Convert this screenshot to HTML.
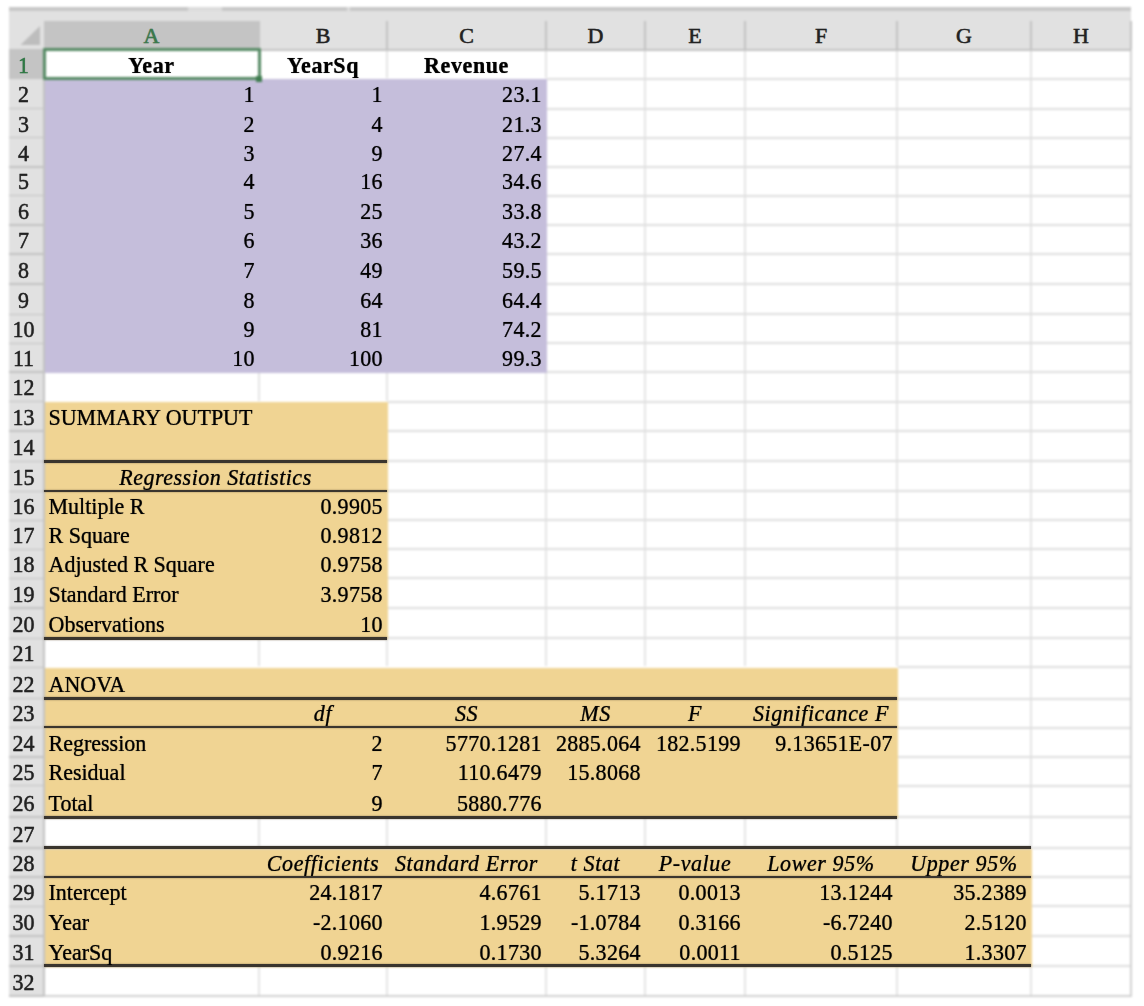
<!DOCTYPE html>
<html><head><meta charset="utf-8"><style>
html,body{margin:0;padding:0;background:#fff;}
body{width:1144px;height:1006px;position:relative;overflow:hidden;font-family:"Liberation Serif",serif;color:#000;}
div{position:absolute;box-sizing:content-box;}
.t{position:absolute;display:block;box-sizing:border-box;font-size:22px;line-height:22px;white-space:nowrap;}
.t{height:22px;transform:scaleY(1.07);transform-origin:50% 18px;-webkit-text-stroke:0.2px currentColor;text-shadow:0 0 1px rgba(0,0,0,0.45);}
.r{text-align:right;padding-right:4.5px;}
.l{text-align:left;padding-left:4.5px;}
.c{text-align:center;}
.rn{-webkit-text-stroke:0.35px currentColor;}
.hb{font-weight:normal;-webkit-text-stroke:0.4px currentColor;transform:none;}
.bl{letter-spacing:0.6px;}
#wrap{position:absolute;left:0;top:0;width:1144px;height:1006px;filter:blur(0.8px);}
</style></head><body><div id="wrap">
<div style="left:9.00px;top:7.00px;width:1122.00px;height:989.10px;background:#e1e1e1;"></div>
<div style="left:9.00px;top:7.00px;width:1122.00px;height:3.80px;background:#c8c8c8;"></div>
<div style="left:188.00px;top:7.00px;width:34.00px;height:3.80px;background:#dcdcdc;"></div>
<div style="left:347.00px;top:7.00px;width:3.00px;height:3.80px;background:#dcdcdc;"></div>
<div style="left:44.00px;top:49.00px;width:1087.00px;height:947.10px;background:#ffffff;"></div>
<div style="left:44.00px;top:20.50px;width:215.00px;height:28.50px;background:#c4c4c4;"></div>
<div style="left:9.00px;top:49.00px;width:35.00px;height:29.70px;background:#c4c4c4;"></div>
<div style="left:258.00px;top:49.00px;width:2.00px;height:947.10px;background:#e5e5e5;"></div>
<div style="left:386.00px;top:49.00px;width:2.00px;height:947.10px;background:#e5e5e5;"></div>
<div style="left:545.00px;top:49.00px;width:2.00px;height:947.10px;background:#e5e5e5;"></div>
<div style="left:644.00px;top:49.00px;width:2.00px;height:947.10px;background:#e5e5e5;"></div>
<div style="left:744.00px;top:49.00px;width:2.00px;height:947.10px;background:#e5e5e5;"></div>
<div style="left:896.00px;top:49.00px;width:2.00px;height:947.10px;background:#e5e5e5;"></div>
<div style="left:1030.00px;top:49.00px;width:2.00px;height:947.10px;background:#e5e5e5;"></div>
<div style="left:1130.00px;top:49.00px;width:2.00px;height:947.10px;background:#e5e5e5;"></div>
<div style="left:44.00px;top:78.00px;width:1087.00px;height:2.00px;background:#dfdfdf;"></div>
<div style="left:44.00px;top:108.00px;width:1087.00px;height:2.00px;background:#dfdfdf;"></div>
<div style="left:44.00px;top:137.00px;width:1087.00px;height:2.00px;background:#dfdfdf;"></div>
<div style="left:44.00px;top:166.00px;width:1087.00px;height:2.00px;background:#dfdfdf;"></div>
<div style="left:44.00px;top:195.00px;width:1087.00px;height:2.00px;background:#dfdfdf;"></div>
<div style="left:44.00px;top:224.00px;width:1087.00px;height:2.00px;background:#dfdfdf;"></div>
<div style="left:44.00px;top:253.00px;width:1087.00px;height:2.00px;background:#dfdfdf;"></div>
<div style="left:44.00px;top:283.00px;width:1087.00px;height:2.00px;background:#dfdfdf;"></div>
<div style="left:44.00px;top:313.00px;width:1087.00px;height:2.00px;background:#dfdfdf;"></div>
<div style="left:44.00px;top:342.00px;width:1087.00px;height:2.00px;background:#dfdfdf;"></div>
<div style="left:44.00px;top:371.00px;width:1087.00px;height:2.00px;background:#dfdfdf;"></div>
<div style="left:44.00px;top:401.00px;width:1087.00px;height:2.00px;background:#dfdfdf;"></div>
<div style="left:44.00px;top:430.00px;width:1087.00px;height:2.00px;background:#dfdfdf;"></div>
<div style="left:44.00px;top:460.00px;width:1087.00px;height:2.00px;background:#dfdfdf;"></div>
<div style="left:44.00px;top:490.00px;width:1087.00px;height:2.00px;background:#dfdfdf;"></div>
<div style="left:44.00px;top:519.00px;width:1087.00px;height:2.00px;background:#dfdfdf;"></div>
<div style="left:44.00px;top:548.00px;width:1087.00px;height:2.00px;background:#dfdfdf;"></div>
<div style="left:44.00px;top:577.00px;width:1087.00px;height:2.00px;background:#dfdfdf;"></div>
<div style="left:44.00px;top:607.00px;width:1087.00px;height:2.00px;background:#dfdfdf;"></div>
<div style="left:44.00px;top:637.00px;width:1087.00px;height:2.00px;background:#dfdfdf;"></div>
<div style="left:44.00px;top:666.00px;width:1087.00px;height:2.00px;background:#dfdfdf;"></div>
<div style="left:44.00px;top:698.00px;width:1087.00px;height:2.00px;background:#dfdfdf;"></div>
<div style="left:44.00px;top:727.00px;width:1087.00px;height:2.00px;background:#dfdfdf;"></div>
<div style="left:44.00px;top:756.00px;width:1087.00px;height:2.00px;background:#dfdfdf;"></div>
<div style="left:44.00px;top:785.00px;width:1087.00px;height:2.00px;background:#dfdfdf;"></div>
<div style="left:44.00px;top:816.00px;width:1087.00px;height:2.00px;background:#dfdfdf;"></div>
<div style="left:44.00px;top:847.00px;width:1087.00px;height:2.00px;background:#dfdfdf;"></div>
<div style="left:44.00px;top:876.00px;width:1087.00px;height:2.00px;background:#dfdfdf;"></div>
<div style="left:44.00px;top:905.00px;width:1087.00px;height:2.00px;background:#dfdfdf;"></div>
<div style="left:44.00px;top:935.00px;width:1087.00px;height:2.00px;background:#dfdfdf;"></div>
<div style="left:44.00px;top:965.00px;width:1087.00px;height:2.00px;background:#dfdfdf;"></div>
<div style="left:44.00px;top:995.00px;width:1087.00px;height:2.00px;background:#dfdfdf;"></div>
<div style="left:1129.50px;top:20.50px;width:2.00px;height:976.10px;background:#d2d2d2;"></div>
<div style="left:9.00px;top:994.60px;width:1122.50px;height:2.00px;background:#d2d2d2;"></div>
<div style="left:44.00px;top:77.80px;width:502.75px;height:1.65px;background:#ffffff;"></div>
<div style="left:44.00px;top:79.45px;width:502.75px;height:293.50px;background:#c5bedb;"></div>
<div style="left:44.00px;top:400.60px;width:343.75px;height:1.65px;background:#ffffff;"></div>
<div style="left:44.00px;top:402.25px;width:343.75px;height:236.90px;background:#f0d493;"></div>
<div style="left:44.00px;top:666.40px;width:853.75px;height:1.65px;background:#ffffff;"></div>
<div style="left:44.00px;top:668.05px;width:853.75px;height:149.70px;background:#f0d493;"></div>
<div style="left:44.00px;top:847.00px;width:987.75px;height:1.65px;background:#ffffff;"></div>
<div style="left:44.00px;top:848.65px;width:987.75px;height:118.00px;background:#f0d493;"></div>
<div style="left:258.25px;top:20.50px;width:1.50px;height:28.50px;background:#c3c3c3;"></div>
<div style="left:386.25px;top:20.50px;width:1.50px;height:28.50px;background:#c3c3c3;"></div>
<div style="left:545.25px;top:20.50px;width:1.50px;height:28.50px;background:#c3c3c3;"></div>
<div style="left:644.25px;top:20.50px;width:1.50px;height:28.50px;background:#c3c3c3;"></div>
<div style="left:744.25px;top:20.50px;width:1.50px;height:28.50px;background:#c3c3c3;"></div>
<div style="left:896.25px;top:20.50px;width:1.50px;height:28.50px;background:#c3c3c3;"></div>
<div style="left:1030.25px;top:20.50px;width:1.50px;height:28.50px;background:#c3c3c3;"></div>
<div style="left:1130.25px;top:20.50px;width:1.50px;height:28.50px;background:#c3c3c3;"></div>
<div style="left:9.00px;top:48.50px;width:1122.00px;height:2.20px;background:#c3c3c3;"></div>
<div style="left:9.00px;top:77.95px;width:35.00px;height:1.50px;background:#c3c3c3;"></div>
<div style="left:9.00px;top:107.85px;width:35.00px;height:1.50px;background:#c3c3c3;"></div>
<div style="left:9.00px;top:136.95px;width:35.00px;height:1.50px;background:#c3c3c3;"></div>
<div style="left:9.00px;top:166.05px;width:35.00px;height:1.50px;background:#c3c3c3;"></div>
<div style="left:9.00px;top:194.85px;width:35.00px;height:1.50px;background:#c3c3c3;"></div>
<div style="left:9.00px;top:224.15px;width:35.00px;height:1.50px;background:#c3c3c3;"></div>
<div style="left:9.00px;top:253.15px;width:35.00px;height:1.50px;background:#c3c3c3;"></div>
<div style="left:9.00px;top:283.45px;width:35.00px;height:1.50px;background:#c3c3c3;"></div>
<div style="left:9.00px;top:313.75px;width:35.00px;height:1.50px;background:#c3c3c3;"></div>
<div style="left:9.00px;top:342.65px;width:35.00px;height:1.50px;background:#c3c3c3;"></div>
<div style="left:9.00px;top:371.45px;width:35.00px;height:1.50px;background:#c3c3c3;"></div>
<div style="left:9.00px;top:400.75px;width:35.00px;height:1.50px;background:#c3c3c3;"></div>
<div style="left:9.00px;top:430.05px;width:35.00px;height:1.50px;background:#c3c3c3;"></div>
<div style="left:9.00px;top:460.55px;width:35.00px;height:1.50px;background:#c3c3c3;"></div>
<div style="left:9.00px;top:490.55px;width:35.00px;height:1.50px;background:#c3c3c3;"></div>
<div style="left:9.00px;top:519.75px;width:35.00px;height:1.50px;background:#c3c3c3;"></div>
<div style="left:9.00px;top:548.55px;width:35.00px;height:1.50px;background:#c3c3c3;"></div>
<div style="left:9.00px;top:577.55px;width:35.00px;height:1.50px;background:#c3c3c3;"></div>
<div style="left:9.00px;top:607.35px;width:35.00px;height:1.50px;background:#c3c3c3;"></div>
<div style="left:9.00px;top:637.65px;width:35.00px;height:1.50px;background:#c3c3c3;"></div>
<div style="left:9.00px;top:666.55px;width:35.00px;height:1.50px;background:#c3c3c3;"></div>
<div style="left:9.00px;top:697.85px;width:35.00px;height:1.50px;background:#c3c3c3;"></div>
<div style="left:9.00px;top:726.75px;width:35.00px;height:1.50px;background:#c3c3c3;"></div>
<div style="left:9.00px;top:756.15px;width:35.00px;height:1.50px;background:#c3c3c3;"></div>
<div style="left:9.00px;top:784.95px;width:35.00px;height:1.50px;background:#c3c3c3;"></div>
<div style="left:9.00px;top:816.25px;width:35.00px;height:1.50px;background:#c3c3c3;"></div>
<div style="left:9.00px;top:847.15px;width:35.00px;height:1.50px;background:#c3c3c3;"></div>
<div style="left:9.00px;top:876.45px;width:35.00px;height:1.50px;background:#c3c3c3;"></div>
<div style="left:9.00px;top:905.55px;width:35.00px;height:1.50px;background:#c3c3c3;"></div>
<div style="left:9.00px;top:935.05px;width:35.00px;height:1.50px;background:#c3c3c3;"></div>
<div style="left:9.00px;top:965.15px;width:35.00px;height:1.50px;background:#c3c3c3;"></div>
<div style="left:9.00px;top:995.35px;width:35.00px;height:1.50px;background:#c3c3c3;"></div>
<div style="left:43.25px;top:49.00px;width:1.50px;height:947.10px;background:#c3c3c3;"></div>
<div style="left:42.50px;top:47.50px;width:212.00px;height:26.70px;border:3px solid #568a64;border-radius:1px;background:transparent"></div>
<div style="left:256.00px;top:75.70px;width:6.00px;height:6.00px;background:#3f7d4f;"></div>
<svg style="position:absolute;left:0;top:0" width="60" height="60"><polygon points="20.5,45 40,45 40,26" fill="#bdbdbd"/></svg>
</div>
<div style="left:44.00px;top:460.00px;width:343.00px;height:3.00px;background:#3a352e;box-shadow:0 0 1.6px rgba(40,36,30,0.6)"></div>
<div style="left:44.00px;top:490.00px;width:343.00px;height:2.00px;background:#3a352e;box-shadow:0 0 1.6px rgba(40,36,30,0.6)"></div>
<div style="left:44.00px;top:637.00px;width:343.00px;height:3.00px;background:#3a352e;box-shadow:0 0 1.6px rgba(40,36,30,0.6)"></div>
<div style="left:44.00px;top:697.00px;width:853.00px;height:3.00px;background:#3a352e;box-shadow:0 0 1.6px rgba(40,36,30,0.6)"></div>
<div style="left:44.00px;top:726.00px;width:853.00px;height:2.00px;background:#3a352e;box-shadow:0 0 1.6px rgba(40,36,30,0.6)"></div>
<div style="left:44.00px;top:816.00px;width:853.00px;height:3.00px;background:#3a352e;box-shadow:0 0 1.6px rgba(40,36,30,0.6)"></div>
<div style="left:44.00px;top:846.00px;width:987.00px;height:3.00px;background:#3a352e;box-shadow:0 0 1.6px rgba(40,36,30,0.6)"></div>
<div style="left:44.00px;top:876.00px;width:987.00px;height:2.00px;background:#3a352e;box-shadow:0 0 1.6px rgba(40,36,30,0.6)"></div>
<div style="left:44.00px;top:964.00px;width:987.00px;height:3.00px;background:#3a352e;box-shadow:0 0 1.6px rgba(40,36,30,0.6)"></div>
<span class="t c hb" style="left:44.00px;width:215.00px;top:24.80px;color:#3a7a4c">A</span>
<span class="t c hb" style="left:259.00px;width:128.00px;top:24.80px;color:#222">B</span>
<span class="t c hb" style="left:387.00px;width:159.00px;top:24.80px;color:#222">C</span>
<span class="t c hb" style="left:546.00px;width:99.00px;top:24.80px;color:#222">D</span>
<span class="t c hb" style="left:645.00px;width:100.00px;top:24.80px;color:#222">E</span>
<span class="t c hb" style="left:745.00px;width:152.00px;top:24.80px;color:#222">F</span>
<span class="t c hb" style="left:897.00px;width:134.00px;top:24.80px;color:#222">G</span>
<span class="t c hb" style="left:1031.00px;width:100.00px;top:24.80px;color:#222">H</span>
<span class="t c rn" style="left:9px;width:29px;top:54.50px;color:#2f7a45">1</span>
<span class="t c rn" style="left:9px;width:29px;top:84.40px;color:#222">2</span>
<span class="t c rn" style="left:9px;width:29px;top:113.50px;color:#222">3</span>
<span class="t c rn" style="left:9px;width:29px;top:142.60px;color:#222">4</span>
<span class="t c rn" style="left:9px;width:29px;top:171.40px;color:#222">5</span>
<span class="t c rn" style="left:9px;width:29px;top:200.70px;color:#222">6</span>
<span class="t c rn" style="left:9px;width:29px;top:229.70px;color:#222">7</span>
<span class="t c rn" style="left:9px;width:29px;top:260.00px;color:#222">8</span>
<span class="t c rn" style="left:9px;width:29px;top:290.30px;color:#222">9</span>
<span class="t c rn" style="left:9px;width:29px;top:319.20px;color:#222">10</span>
<span class="t c rn" style="left:9px;width:29px;top:348.00px;color:#222">11</span>
<span class="t c rn" style="left:9px;width:29px;top:377.30px;color:#222">12</span>
<span class="t c rn" style="left:9px;width:29px;top:406.60px;color:#222">13</span>
<span class="t c rn" style="left:9px;width:29px;top:437.10px;color:#222">14</span>
<span class="t c rn" style="left:9px;width:29px;top:467.10px;color:#222">15</span>
<span class="t c rn" style="left:9px;width:29px;top:496.30px;color:#222">16</span>
<span class="t c rn" style="left:9px;width:29px;top:525.10px;color:#222">17</span>
<span class="t c rn" style="left:9px;width:29px;top:554.10px;color:#222">18</span>
<span class="t c rn" style="left:9px;width:29px;top:583.90px;color:#222">19</span>
<span class="t c rn" style="left:9px;width:29px;top:614.20px;color:#222">20</span>
<span class="t c rn" style="left:9px;width:29px;top:643.10px;color:#222">21</span>
<span class="t c rn" style="left:9px;width:29px;top:674.40px;color:#222">22</span>
<span class="t c rn" style="left:9px;width:29px;top:703.30px;color:#222">23</span>
<span class="t c rn" style="left:9px;width:29px;top:732.70px;color:#222">24</span>
<span class="t c rn" style="left:9px;width:29px;top:761.50px;color:#222">25</span>
<span class="t c rn" style="left:9px;width:29px;top:792.80px;color:#222">26</span>
<span class="t c rn" style="left:9px;width:29px;top:823.70px;color:#222">27</span>
<span class="t c rn" style="left:9px;width:29px;top:853.00px;color:#222">28</span>
<span class="t c rn" style="left:9px;width:29px;top:882.10px;color:#222">29</span>
<span class="t c rn" style="left:9px;width:29px;top:911.60px;color:#222">30</span>
<span class="t c rn" style="left:9px;width:29px;top:941.70px;color:#222">31</span>
<span class="t c rn" style="left:9px;width:29px;top:971.90px;color:#222">32</span>
<span class="t c" style="left:44.00px;width:215.00px;top:54.50px;font-weight:bold;letter-spacing:0.6px">Year</span>
<span class="t c" style="left:259.00px;width:128.00px;top:54.50px;font-weight:bold;letter-spacing:0.6px">YearSq</span>
<span class="t c" style="left:387.00px;width:159.00px;top:54.50px;font-weight:bold;letter-spacing:0.6px">Revenue</span>
<span class="t r" style="left:44.00px;width:215.00px;top:84.40px;letter-spacing:0.3px;padding-right:4.2px;">1</span>
<span class="t r" style="left:259.00px;width:128.00px;top:84.40px;letter-spacing:0.3px;padding-right:4.2px;">1</span>
<span class="t r" style="left:387.00px;width:159.00px;top:84.40px;letter-spacing:0.3px;padding-right:4.2px;">23.1</span>
<span class="t r" style="left:44.00px;width:215.00px;top:113.50px;letter-spacing:0.3px;padding-right:4.2px;">2</span>
<span class="t r" style="left:259.00px;width:128.00px;top:113.50px;letter-spacing:0.3px;padding-right:4.2px;">4</span>
<span class="t r" style="left:387.00px;width:159.00px;top:113.50px;letter-spacing:0.3px;padding-right:4.2px;">21.3</span>
<span class="t r" style="left:44.00px;width:215.00px;top:142.60px;letter-spacing:0.3px;padding-right:4.2px;">3</span>
<span class="t r" style="left:259.00px;width:128.00px;top:142.60px;letter-spacing:0.3px;padding-right:4.2px;">9</span>
<span class="t r" style="left:387.00px;width:159.00px;top:142.60px;letter-spacing:0.3px;padding-right:4.2px;">27.4</span>
<span class="t r" style="left:44.00px;width:215.00px;top:171.40px;letter-spacing:0.3px;padding-right:4.2px;">4</span>
<span class="t r" style="left:259.00px;width:128.00px;top:171.40px;letter-spacing:0.3px;padding-right:4.2px;">16</span>
<span class="t r" style="left:387.00px;width:159.00px;top:171.40px;letter-spacing:0.3px;padding-right:4.2px;">34.6</span>
<span class="t r" style="left:44.00px;width:215.00px;top:200.70px;letter-spacing:0.3px;padding-right:4.2px;">5</span>
<span class="t r" style="left:259.00px;width:128.00px;top:200.70px;letter-spacing:0.3px;padding-right:4.2px;">25</span>
<span class="t r" style="left:387.00px;width:159.00px;top:200.70px;letter-spacing:0.3px;padding-right:4.2px;">33.8</span>
<span class="t r" style="left:44.00px;width:215.00px;top:229.70px;letter-spacing:0.3px;padding-right:4.2px;">6</span>
<span class="t r" style="left:259.00px;width:128.00px;top:229.70px;letter-spacing:0.3px;padding-right:4.2px;">36</span>
<span class="t r" style="left:387.00px;width:159.00px;top:229.70px;letter-spacing:0.3px;padding-right:4.2px;">43.2</span>
<span class="t r" style="left:44.00px;width:215.00px;top:260.00px;letter-spacing:0.3px;padding-right:4.2px;">7</span>
<span class="t r" style="left:259.00px;width:128.00px;top:260.00px;letter-spacing:0.3px;padding-right:4.2px;">49</span>
<span class="t r" style="left:387.00px;width:159.00px;top:260.00px;letter-spacing:0.3px;padding-right:4.2px;">59.5</span>
<span class="t r" style="left:44.00px;width:215.00px;top:290.30px;letter-spacing:0.3px;padding-right:4.2px;">8</span>
<span class="t r" style="left:259.00px;width:128.00px;top:290.30px;letter-spacing:0.3px;padding-right:4.2px;">64</span>
<span class="t r" style="left:387.00px;width:159.00px;top:290.30px;letter-spacing:0.3px;padding-right:4.2px;">64.4</span>
<span class="t r" style="left:44.00px;width:215.00px;top:319.20px;letter-spacing:0.3px;padding-right:4.2px;">9</span>
<span class="t r" style="left:259.00px;width:128.00px;top:319.20px;letter-spacing:0.3px;padding-right:4.2px;">81</span>
<span class="t r" style="left:387.00px;width:159.00px;top:319.20px;letter-spacing:0.3px;padding-right:4.2px;">74.2</span>
<span class="t r" style="left:44.00px;width:215.00px;top:348.00px;letter-spacing:0.3px;padding-right:4.2px;">10</span>
<span class="t r" style="left:259.00px;width:128.00px;top:348.00px;letter-spacing:0.3px;padding-right:4.2px;">100</span>
<span class="t r" style="left:387.00px;width:159.00px;top:348.00px;letter-spacing:0.3px;padding-right:4.2px;">99.3</span>
<span class="t l" style="left:44.00px;width:215.00px;top:406.60px;">SUMMARY OUTPUT</span>
<span class="t c" style="left:44.00px;width:343.00px;top:467.10px;"><i style="letter-spacing:0.5px">Regression Statistics</i></span>
<span class="t l" style="left:44.00px;width:215.00px;top:496.30px;">Multiple R</span>
<span class="t r" style="left:259.00px;width:128.00px;top:496.30px;letter-spacing:0.3px;padding-right:4.2px;">0.9905</span>
<span class="t l" style="left:44.00px;width:215.00px;top:525.10px;">R Square</span>
<span class="t r" style="left:259.00px;width:128.00px;top:525.10px;letter-spacing:0.3px;padding-right:4.2px;">0.9812</span>
<span class="t l" style="left:44.00px;width:215.00px;top:554.10px;">Adjusted R Square</span>
<span class="t r" style="left:259.00px;width:128.00px;top:554.10px;letter-spacing:0.3px;padding-right:4.2px;">0.9758</span>
<span class="t l" style="left:44.00px;width:215.00px;top:583.90px;">Standard Error</span>
<span class="t r" style="left:259.00px;width:128.00px;top:583.90px;letter-spacing:0.3px;padding-right:4.2px;">3.9758</span>
<span class="t l" style="left:44.00px;width:215.00px;top:614.20px;">Observations</span>
<span class="t r" style="left:259.00px;width:128.00px;top:614.20px;letter-spacing:0.3px;padding-right:4.2px;">10</span>
<span class="t l" style="left:44.00px;width:215.00px;top:674.40px;">ANOVA</span>
<span class="t c" style="left:259.00px;width:128.00px;top:703.30px;"><i style="letter-spacing:0.6px">df</i></span>
<span class="t c" style="left:387.00px;width:159.00px;top:703.30px;"><i style="letter-spacing:0.6px">SS</i></span>
<span class="t c" style="left:546.00px;width:99.00px;top:703.30px;"><i style="letter-spacing:0.6px">MS</i></span>
<span class="t c" style="left:645.00px;width:100.00px;top:703.30px;"><i style="letter-spacing:0.6px">F</i></span>
<span class="t c" style="left:745.00px;width:152.00px;top:703.30px;"><i style="letter-spacing:0.6px">Significance F</i></span>
<span class="t l" style="left:44.00px;width:215.00px;top:732.70px;">Regression</span>
<span class="t r" style="left:259.00px;width:128.00px;top:732.70px;letter-spacing:0.3px;padding-right:4.2px;">2</span>
<span class="t r" style="left:387.00px;width:159.00px;top:732.70px;letter-spacing:0.3px;padding-right:4.2px;">5770.1281</span>
<span class="t r" style="left:546.00px;width:99.00px;top:732.70px;letter-spacing:0.3px;padding-right:4.2px;">2885.064</span>
<span class="t r" style="left:645.00px;width:100.00px;top:732.70px;letter-spacing:0.3px;padding-right:4.2px;">182.5199</span>
<span class="t r" style="left:745.00px;width:152.00px;top:732.70px;letter-spacing:0.3px;padding-right:4.2px;">9.13651E-07</span>
<span class="t l" style="left:44.00px;width:215.00px;top:761.50px;">Residual</span>
<span class="t r" style="left:259.00px;width:128.00px;top:761.50px;letter-spacing:0.3px;padding-right:4.2px;">7</span>
<span class="t r" style="left:387.00px;width:159.00px;top:761.50px;letter-spacing:0.3px;padding-right:4.2px;">110.6479</span>
<span class="t r" style="left:546.00px;width:99.00px;top:761.50px;letter-spacing:0.3px;padding-right:4.2px;">15.8068</span>
<span class="t l" style="left:44.00px;width:215.00px;top:792.80px;">Total</span>
<span class="t r" style="left:259.00px;width:128.00px;top:792.80px;letter-spacing:0.3px;padding-right:4.2px;">9</span>
<span class="t r" style="left:387.00px;width:159.00px;top:792.80px;letter-spacing:0.3px;padding-right:4.2px;">5880.776</span>
<span class="t c" style="left:259.00px;width:128.00px;top:853.00px;"><i style="letter-spacing:0.6px">Coefficients</i></span>
<span class="t c" style="left:387.00px;width:159.00px;top:853.00px;"><i style="letter-spacing:0.6px">Standard Error</i></span>
<span class="t c" style="left:546.00px;width:99.00px;top:853.00px;"><i style="letter-spacing:0.6px">t Stat</i></span>
<span class="t c" style="left:645.00px;width:100.00px;top:853.00px;"><i style="letter-spacing:0.6px">P-value</i></span>
<span class="t c" style="left:745.00px;width:152.00px;top:853.00px;"><i style="letter-spacing:0.6px">Lower 95%</i></span>
<span class="t c" style="left:897.00px;width:134.00px;top:853.00px;"><i style="letter-spacing:0.6px">Upper 95%</i></span>
<span class="t l" style="left:44.00px;width:215.00px;top:882.10px;">Intercept</span>
<span class="t r" style="left:259.00px;width:128.00px;top:882.10px;letter-spacing:0.3px;padding-right:4.2px;">24.1817</span>
<span class="t r" style="left:387.00px;width:159.00px;top:882.10px;letter-spacing:0.3px;padding-right:4.2px;">4.6761</span>
<span class="t r" style="left:546.00px;width:99.00px;top:882.10px;letter-spacing:0.3px;padding-right:4.2px;">5.1713</span>
<span class="t r" style="left:645.00px;width:100.00px;top:882.10px;letter-spacing:0.3px;padding-right:4.2px;">0.0013</span>
<span class="t r" style="left:745.00px;width:152.00px;top:882.10px;letter-spacing:0.3px;padding-right:4.2px;">13.1244</span>
<span class="t r" style="left:897.00px;width:134.00px;top:882.10px;letter-spacing:0.3px;padding-right:4.2px;">35.2389</span>
<span class="t l" style="left:44.00px;width:215.00px;top:911.60px;">Year</span>
<span class="t r" style="left:259.00px;width:128.00px;top:911.60px;letter-spacing:0.3px;padding-right:4.2px;">-2.1060</span>
<span class="t r" style="left:387.00px;width:159.00px;top:911.60px;letter-spacing:0.3px;padding-right:4.2px;">1.9529</span>
<span class="t r" style="left:546.00px;width:99.00px;top:911.60px;letter-spacing:0.3px;padding-right:4.2px;">-1.0784</span>
<span class="t r" style="left:645.00px;width:100.00px;top:911.60px;letter-spacing:0.3px;padding-right:4.2px;">0.3166</span>
<span class="t r" style="left:745.00px;width:152.00px;top:911.60px;letter-spacing:0.3px;padding-right:4.2px;">-6.7240</span>
<span class="t r" style="left:897.00px;width:134.00px;top:911.60px;letter-spacing:0.3px;padding-right:4.2px;">2.5120</span>
<span class="t l" style="left:44.00px;width:215.00px;top:941.70px;">YearSq</span>
<span class="t r" style="left:259.00px;width:128.00px;top:941.70px;letter-spacing:0.3px;padding-right:4.2px;">0.9216</span>
<span class="t r" style="left:387.00px;width:159.00px;top:941.70px;letter-spacing:0.3px;padding-right:4.2px;">0.1730</span>
<span class="t r" style="left:546.00px;width:99.00px;top:941.70px;letter-spacing:0.3px;padding-right:4.2px;">5.3264</span>
<span class="t r" style="left:645.00px;width:100.00px;top:941.70px;letter-spacing:0.3px;padding-right:4.2px;">0.0011</span>
<span class="t r" style="left:745.00px;width:152.00px;top:941.70px;letter-spacing:0.3px;padding-right:4.2px;">0.5125</span>
<span class="t r" style="left:897.00px;width:134.00px;top:941.70px;letter-spacing:0.3px;padding-right:4.2px;">1.3307</span>
</body></html>
